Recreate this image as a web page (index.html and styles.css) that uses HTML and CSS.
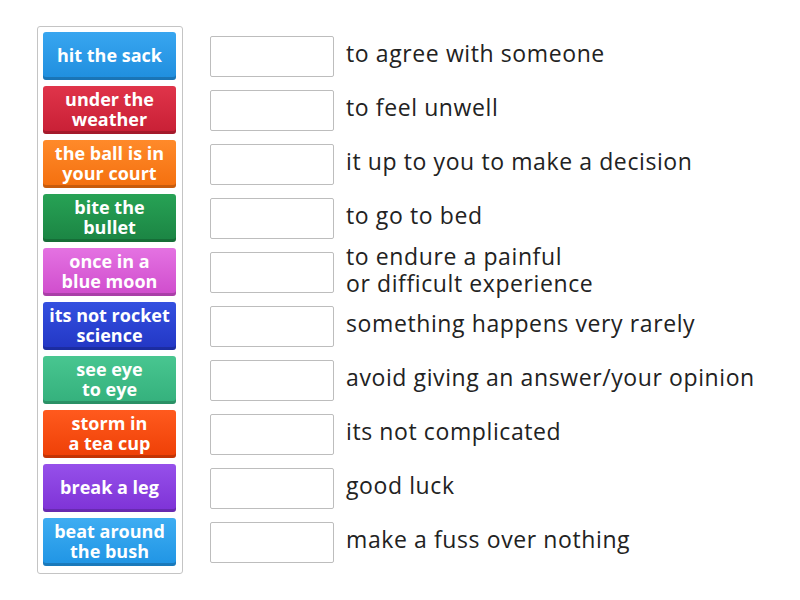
FILE: index.html
```html
<!DOCTYPE html>
<html>
<head>
<meta charset="utf-8">
<link rel="stylesheet" href="styles.css">
</head>
<body>
<div class="page">
  <div class="bank">
    <div class="tile c1">hit the sack</div>
    <div class="tile c2">under the weather</div>
    <div class="tile c3">the ball is in your court</div>
    <div class="tile c4">bite the bullet</div>
    <div class="tile c5">once in a<br>blue moon</div>
    <div class="tile c6">its not rocket science</div>
    <div class="tile c7">see eye<br>to eye</div>
    <div class="tile c8">storm in<br>a tea cup</div>
    <div class="tile c9">break a leg</div>
    <div class="tile c10">beat around the bush</div>
  </div>
  <div class="rows">
    <div class="row"><div class="slot"></div><div class="def">to agree with someone</div></div>
    <div class="row"><div class="slot"></div><div class="def">to feel unwell</div></div>
    <div class="row"><div class="slot"></div><div class="def">it up to you to make a decision</div></div>
    <div class="row"><div class="slot"></div><div class="def">to go to bed</div></div>
    <div class="row"><div class="slot"></div><div class="def">to endure a painful<br>or difficult experience</div></div>
    <div class="row"><div class="slot"></div><div class="def">something happens very rarely</div></div>
    <div class="row"><div class="slot"></div><div class="def">avoid giving an answer/your opinion</div></div>
    <div class="row"><div class="slot"></div><div class="def">its not complicated</div></div>
    <div class="row"><div class="slot"></div><div class="def">good luck</div></div>
    <div class="row"><div class="slot"></div><div class="def">make a fuss over nothing</div></div>
  </div>
</div>
</body>
</html>
```
FILE: styles.css
```css
html, body {
  margin: 0;
  padding: 0;
  background: #ffffff;
}
.page {
  display: flex;
  align-items: flex-start;
  gap: 27px;
  padding: 26px 0 0 37px;
  font-family: "Open Sans", "DejaVu Sans", sans-serif;
}
.bank {
  width: 133px;
  padding: 5px 6px 7px 5px;
  border: 1px solid #c4c4c4;
  border-radius: 3px;
  display: flex;
  flex-direction: column;
  gap: 6px;
}
.tile {
  height: 48px;
  border-radius: 3px;
  color: #ffffff;
  font-weight: 700;
  font-size: 18px;
  line-height: 20px;
  text-align: center;
  display: flex;
  align-items: center;
  justify-content: center;
  padding: 0 3px 3px;
  box-sizing: border-box;
  box-shadow: inset 0 -3px 0 rgba(0,0,0,0.18);
}
.c1 { background: linear-gradient(#38a6f0, #1f8ede); }
.c2 { background: linear-gradient(#e0344a, #c81f35); }
.c3 { background: linear-gradient(#ff8a2a, #f46f0e); }
.c4 { background: linear-gradient(#27a255, #1b8443); }
.c5 { background: linear-gradient(#e472e2, #cf4ccc); }
.c6 { background: linear-gradient(#3450e0, #2236c4); }
.c7 { background: linear-gradient(#48c690, #34b07c); }
.c8 { background: linear-gradient(#ff5a1e, #ee3f06); }
.c9 { background: linear-gradient(#9650ea, #7e32d6); }
.c10 { background: linear-gradient(#3eadf2, #1f94e4); }
.rows {
  padding-top: 6px;
  display: flex;
  flex-direction: column;
  gap: 6px;
}
.row {
  height: 48px;
  display: flex;
  align-items: center;
  gap: 12px;
}
.slot {
  width: 122px;
  height: 39px;
  border: 1px solid #bdbdbd;
  border-radius: 2px;
  background: #fff;
  flex: none;
}
.def {
  font-size: 23px;
  line-height: 27px;
  letter-spacing: 0.6px;
  color: #222222;
  white-space: nowrap;
  margin-bottom: 5px;
}
```
